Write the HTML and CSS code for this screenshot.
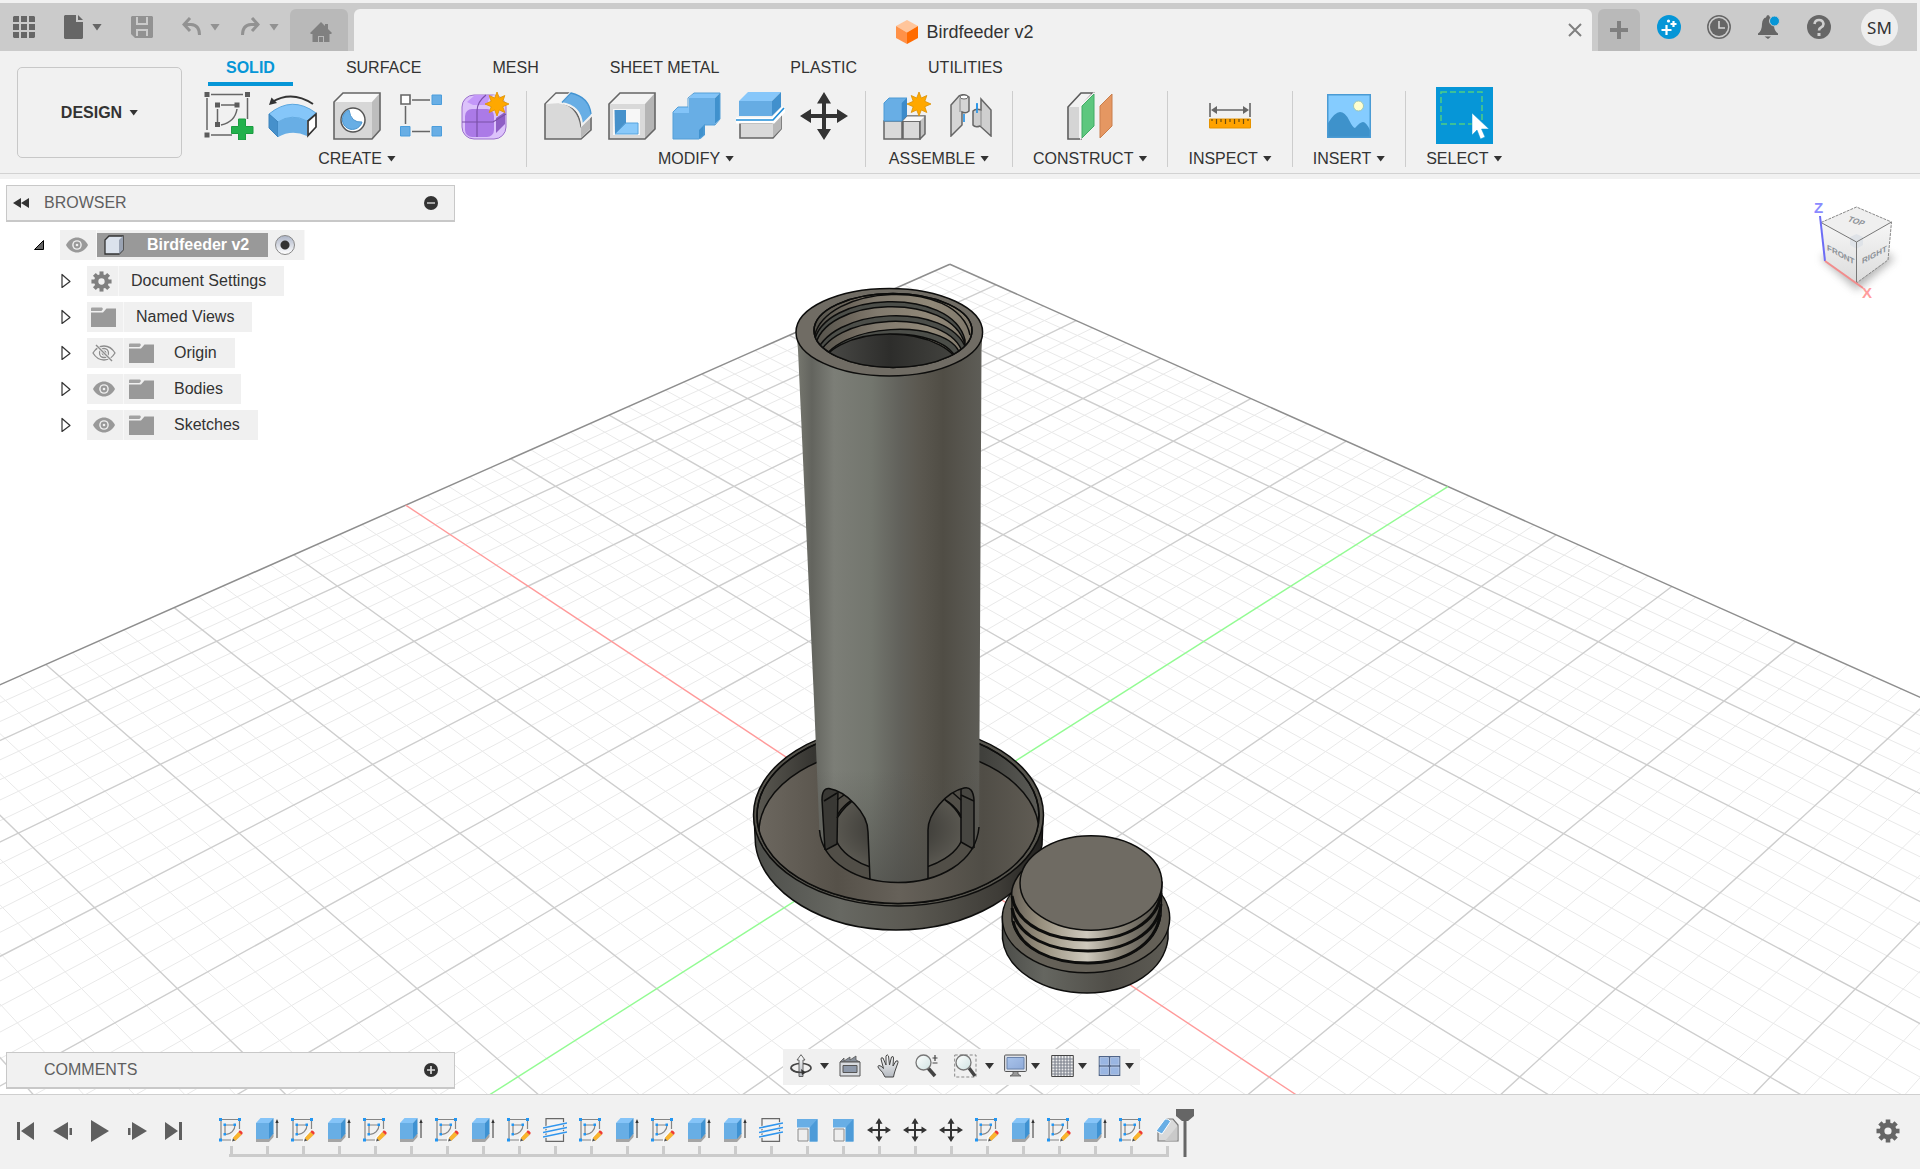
FILE: index.html
```html
<!DOCTYPE html>
<html lang="en">
<head>
<meta charset="utf-8">
<meta name="viewport" content="width=device-width, initial-scale=1">
<title>Birdfeeder v2</title>
<link rel="stylesheet" href="styles.css">
</head>
<body>
<svg class="defs" aria-hidden="true">
  <defs>
    <linearGradient id="lens" x1="0" y1="0" x2="1" y2="1"><stop offset="0" stop-color="#fff"/><stop offset="1" stop-color="#cfe3e2"/></linearGradient>
    <linearGradient id="steel" x1="0" y1="0" x2="0" y2="1"><stop offset="0" stop-color="#fdfdfd"/><stop offset="1" stop-color="#b4b9c0"/></linearGradient>
    <linearGradient id="screen" x1="0" y1="0" x2="1" y2="1"><stop offset="0" stop-color="#a9c3ea"/><stop offset="1" stop-color="#8fabd9"/></linearGradient>
  </defs>
  <symbol id="i-eye" viewBox="0 0 24 18"><path d="M1 9C4 3.500 8 1.500 12 1.500S20 3.500 23 9C20 14.500 16 16.500 12 16.500S4 14.500 1 9Z" fill="#999"/><circle cx="12" cy="9" r="4.800" fill="#f0f0f0"/><circle cx="12" cy="9" r="3.400" fill="#999"/><circle cx="12" cy="9" r="1.300" fill="#f0f0f0"/></symbol>
  <symbol id="i-eye-off" viewBox="0 0 24 18"><g fill="none" stroke="#8d8d8d" stroke-width="1.300"><path d="M1 9C4 4 8 2 12 2S20 4 23 9C20 14 16 16 12 16S4 14 1 9Z"/><circle cx="12" cy="9" r="4.500"/><circle cx="12" cy="9" r="1.800"/></g><path d="M4 1 20 17" stroke="#f0f0f0" stroke-width="3"/><path d="M4 1 20 17" stroke="#8d8d8d" stroke-width="1.500"/></symbol>
  <symbol id="i-folder" viewBox="0 0 25 20"><path d="M0 1.500Q0 .5 1 .5H11L12 2 10.500 4H0Z" fill="#a2a2a2"/><path d="M0 5.500H12L15.500 1.500H25V20H0Z" fill="#999"/></symbol>
  <symbol id="i-gear" viewBox="-12 -12 24 24"><g fill="currentColor"><path fill-rule="evenodd" d="M0-8.400A8.400 8.400 0 1 1 0 8.400 8.400 8.400 0 1 1 0-8.400ZM0-3.600A3.600 3.600 0 1 0 0 3.600 3.600 3.600 0 1 0 0-3.600Z"/><rect x="-2.300" y="-11.500" width="4.600" height="5"/><rect x="-2.300" y="6.500" width="4.600" height="5"/><rect x="-11.500" y="-2.300" width="5" height="4.600"/><rect x="6.500" y="-2.300" width="5" height="4.600"/><g transform="rotate(45)"><rect x="-2.300" y="-11.500" width="4.600" height="5"/><rect x="-2.300" y="6.500" width="4.600" height="5"/><rect x="-11.500" y="-2.300" width="5" height="4.600"/><rect x="6.500" y="-2.300" width="5" height="4.600"/></g></g></symbol>
  <symbol id="i-closed" viewBox="0 0 10 16"><path d="M1 1.500V14.500L9 8.500Z" fill="#fff" stroke="#333" stroke-width="1.200" stroke-linejoin="round"/></symbol>
  <symbol id="i-star" viewBox="-12 -12 24 24"><path d="M0-12 2.300-6 7.800-8.500 5.800-2.700 12 0 5.800 2.700 7.800 8.500 2.300 6 0 12-2.300 6-7.800 8.500-5.800 2.700-12 0-5.800-2.700-7.800-8.500-2.300-6Z" fill="#ffa800" stroke="#dc9100" stroke-width=".8"/></symbol>
  <symbol id="i-move" viewBox="0 0 48 48"><path d="M24 0 31 11.500H26V22H37V17L48 24 37 31V26H26V37H31L24 48 17 37H22V26H11V31L0 24 11 17V22H22V11.500H17Z" fill="#333"/></symbol>

  <symbol id="t-sketch" viewBox="0 0 24 24"><g fill="none" stroke="#858585" stroke-width="1.200"><path d="M2 1.500H20.500V11M2 1.500V22H12"/><path d="M6 7V16.500C12 16.500 16 12 16 7Z"/></g><g fill="#2196f3"><path d="M0 0H3V3H0ZM19 0H22V3H19ZM0 20.500H3V23.500H0ZM4.500 5.500H7V8H4.500ZM14.500 5.500H17V8H14.500ZM4.500 15H7V17.500H4.500Z"/></g><path d="M12 24 12.500 19.500 19 12.500 23.500 16 16.500 23Z" fill="#fff"/><path d="M13 23.500 14 20 16.500 22.500Z" fill="#555"/><path d="M14 20 19.500 14 22.500 16.800 16.500 22.500Z" fill="#fbb52c" stroke="#d99a2b" stroke-width=".5"/><path d="M19.500 14 20.500 12.600Q22 12 23.500 14.500V16L22.500 16.800Z" fill="#ee3a32"/></symbol>
  <symbol id="t-extrude" viewBox="0 0 24 24"><path d="M1 24V20H14L18.500 15V19L14 24Z" fill="#a5a5a5"/><path d="M1 5 5.500 0H18.500L14 5Z" fill="#85c4f8"/><path d="M1 5H14V21H1Z" fill="#68aee5"/><path d="M14 5 18.500 0V15.500L14 21Z" fill="#3f92d2"/><path d="M22 4V20" stroke="#333"/><path d="M22 1 23.700 5H20.300Z" fill="#333"/></symbol>
  <symbol id="t-thread" viewBox="0 0 24 24"><path d="M3 .7H20.500V23.300H3Z" fill="#f3f3f3" stroke="#686868" stroke-width="1.200"/><path d="M0 10 24 5M0 14.500 24 9.500M0 19 24 14" stroke="#f3f3f3" stroke-width="3"/><path d="M0 10 24 5M0 14.500 24 9.500M0 19 24 14" stroke="#2f95ee" stroke-width="1.500"/></symbol>
  <symbol id="t-scale" viewBox="0 0 24 24"><path d="M2 1H22.500V23.500H2Z" fill="#68aee5"/><path d="M16 8 22.500 1V23.500H14V11Z" fill="#4d9bd8"/><path d="M1 9.500H14.500V24H1Z" fill="#f5f5f5"/><path d="M3 11H13V23H3Z" fill="#eee" stroke="#8a8a8a"/></symbol>
  <symbol id="t-chamfer" viewBox="0 0 24 24"><path d="M3 23V13L12 1H18L23 7V23Z" fill="#d9d9d9" stroke="#777" stroke-width="1.200"/><path d="M10 23 22.400 8V22.400Z" fill="#cacaca"/><path d="M1 13 10 1Q13 0 15.500 3.500L7 16Z" fill="#68aee5" stroke="#fff"/></symbol>
</svg>

<div class="app">
  <header class="topbar">
    <div class="quick">
      <button class="ib" aria-label="Show data panel"><svg width="22" height="22" viewBox="0 0 22 22"><path fill="#666" d="M1 0H6V6H0V1ZM8 0H14V6H8ZM16 0H21L22 1V6H16ZM0 8H6V14H0ZM8 8H14V14H8ZM16 8H22V14H16ZM0 16H6V22H1L0 21ZM8 16H14V22H8ZM16 16H22V21L21 22H16Z"/></svg></button>
      <button class="ib ib-menu" aria-label="File"><svg width="19" height="24" viewBox="0 0 19 24"><path d="M1 0H12V7H19V23L18 24H1L0 23V1Z" fill="#666"/><path d="M14 0 19 5H14Z" fill="#666"/></svg><i class="caret caret-grey"></i></button>
      <button class="ib" aria-label="Save"><svg width="22" height="22" viewBox="0 0 22 22"><path fill="#929292" fill-rule="evenodd" d="M1 0H21L22 1V21L21 22H4L0 18V1ZM5 1V9H17V1H15V7H7V1ZM5 13V20H7V15H15V20H17V13Z"/><path d="M11 2H14V6H11Z" fill="#929292"/></svg></button>
      <div class="history">
        <button class="ib ib-menu" aria-label="Undo"><svg width="19" height="20" viewBox="0 0 19 20"><path d="M8 1 2 7.500 8 14M2 7.500H9Q17.500 8 17.500 18" fill="none" stroke="#929292" stroke-width="3"/></svg><i class="caret caret-light"></i></button>
        <button class="ib ib-menu" aria-label="Redo"><svg width="19" height="20" viewBox="0 0 19 20"><path d="M11 1 17 7.500 11 14M17 7.500H10Q1.500 8 1.500 18" fill="none" stroke="#929292" stroke-width="3"/></svg><i class="caret caret-light"></i></button>
      </div>
    </div>
    <button class="home-tab" aria-label="Home"><svg width="22" height="20" viewBox="0 0 22 20"><path d="M11 0 15 4V2H18V7L22 11 21 12H19.500V20H14V14H8V20H2.500V12H1L0 11Z" fill="#808080"/><path d="M9 15H13V20H9Z" fill="#808080"/></svg></button>
    <div class="doc-tab">
      <h1 class="doc-title"><svg width="22" height="24" viewBox="0 0 22 24"><path d="M11 0 22 6 11 12.500 0 6Z" fill="#ffc59b"/><path d="M0 6 11 12.500V24L0 18Z" fill="#ff9147"/><path d="M22 6 11 12.500V24L22 18Z" fill="#ff6b00"/></svg>Birdfeeder v2</h1>
      <button class="ib" aria-label="Close document"><svg width="18" height="18" viewBox="0 0 18 18"><path d="M3 3 15 15M15 3 3 15" stroke="#808080" stroke-width="2"/></svg></button>
    </div>
    <button class="new-tab" aria-label="New design"><svg width="20" height="20" viewBox="0 0 20 20"><path d="M10 1V19M1 10H19" stroke="#808080" stroke-width="4"/></svg></button>
    <div class="account">
      <button class="ib" aria-label="Extensions"><svg width="24" height="24" viewBox="0 0 24 24"><circle cx="12" cy="12" r="12" fill="#0696d7"/><path d="M9.500 10V20M4.500 15H14.500M16.500 6V12M13.500 9H19.500" stroke="#fff" stroke-width="2.200"/><circle cx="11.500" cy="6" r="1.600" fill="#fff"/></svg></button>
      <button class="ib" aria-label="Job status"><svg width="24" height="24" viewBox="0 0 24 24"><circle cx="12" cy="12" r="11.200" fill="none" stroke="#666" stroke-width="1.500"/><circle cx="12" cy="12" r="9" fill="#666"/><path d="M12 6V13H18" fill="none" stroke="#d5d5d5" stroke-width="1.600"/></svg></button>
      <button class="ib" aria-label="Notifications"><svg width="24" height="24" viewBox="0 0 24 24"><path d="M1 20V18.500Q5 16 5 9Q5.500 3 9 2.500Q9.500 0 11 0T13 2.500Q17 4 17 10Q17 16 21 18.500V20ZM7.500 21.500H14L11 24Z" fill="#666"/><circle cx="17.500" cy="6" r="5" fill="#0696d7" stroke="#cbcbcb"/></svg></button>
      <button class="ib" aria-label="Help"><svg width="24" height="24" viewBox="0 0 24 24"><circle cx="12" cy="12" r="12" fill="#666"/><path d="M7.500 9Q8 5 12 5T16.500 9Q16.500 11 14 12.500 12 13.500 12 15.500" fill="none" stroke="#d0d0d0" stroke-width="2.600"/><rect x="10.500" y="18" width="3" height="3" fill="#d0d0d0"/></svg></button>
      <button class="avatar">SM</button>
    </div>
  </header>

  <section class="ribbon">
    <button class="workspace">DESIGN<i class="caret"></i></button>
    <div class="ribbon-main">
      <nav class="tabs">
        <button class="tab tab-on">SOLID</button><button class="tab">SURFACE</button><button class="tab">MESH</button><button class="tab">SHEET METAL</button><button class="tab">PLASTIC</button><button class="tab">UTILITIES</button>
      </nav>
      <div class="groups">
        <div class="group">
          <div class="tools">
            <button class="tool" aria-label="Create sketch"><svg width="50" height="48" viewBox="0 0 50 48"><path d="M7 2.500H39M3 6V38M43.500 6V27M7 43H28" stroke="#666" stroke-width="1.500"/><path d="M17 13H31M13.500 17V30M33 17Q31 30 17 33" fill="none" stroke="#666" stroke-width="1.500"/><path d="M.500 0H5.500V5H.500ZM41 0H46V5H41ZM.500 40.500H5.500V45.500H.500ZM11 10.500H16V15.500H11ZM30.500 10.500H35.500V15.500H30.500ZM11 30H16V35H11Z" fill="#5c5c5c"/><path d="M34.500 27H41.500V34.500H49V41.500H41.500V48H34.500V41.500H27.500V34.500H34.500Z" fill="#22b14c" stroke="#1a9c40"/></svg></button>
            <button class="tool" aria-label="Revolve"><svg width="50" height="46" viewBox="0 0 50 46"><path d="M1 21Q24 2 48 20L39 28Q24 20 10 29Z" fill="#85c6f9" stroke="#5ba7df"/><path d="M1 21 10 29V44L1 35Z" fill="#4690cb" stroke="#3c84be"/><path d="M10 29Q24 20 39 28V43Q24 36 10 44Z" fill="#68aee5"/><path d="M40 28 48 21V34L40 42.500Z" fill="#fff" stroke="#333" stroke-width="1.700"/><path d="M4 9Q24-3 45 11" fill="none" stroke="#333" stroke-width="2"/><path d="M1 12 3.500 4.500 9 10Z" fill="#333"/></svg></button>
            <button class="tool" aria-label="Hole"><svg width="48" height="48" viewBox="0 0 48 48"><path d="M1 10 10 1H47L39 10Z" fill="#f8f8f8"/><path d="M1 10H39V47H1Z" fill="#d7d7d7"/><path d="M39 10 47 1V38L39 47Z" fill="#bdbdbd"/><path d="M1 10 10 1H47V38L39 47H1Z" fill="none" stroke="#666" stroke-width="1.600"/><circle cx="20" cy="28" r="12" fill="#fff" stroke="#555" stroke-width="1.500"/><path d="M16 18Q18 31 29 30A10 10 0 1 1 16 18Z" fill="#68aee5" stroke="#4a94ce"/></svg></button>
            <button class="tool" aria-label="Rectangular pattern"><svg width="42" height="43" viewBox="0 0 42 43"><path d="M12 6H30M5.500 12V30M12 37.500H30" stroke="#666" stroke-width="1.500"/><path d="M1 1H10V10H1Z" fill="#fff" stroke="#666" stroke-width="1.600"/><path d="M32 1H41.500V10.500H32ZM.500 32.500H10V42H.500ZM32 32.500H41.500V42H32Z" fill="#68aee5" stroke="#4b9ddc"/></svg></button>
            <button class="tool" aria-label="Create form"><svg width="48" height="48" viewBox="0 0 48 48"><rect x="1" y="3" width="44" height="44" rx="12" fill="#dcc2fb" stroke="#9a6fcc"/><path d="M6 10 14 3H28L32 13H12Z" fill="#c397f9"/><path d="M35 26 44 20V32L35 41Z" fill="#8f5fc5"/><rect x="4" y="17" width="29" height="28" rx="7" fill="#ab7ae7"/><path d="M1 30H32L45 22M16 45V19Q16 10 25 3" fill="none" stroke="#7a50a8" stroke-width="1.200"/><circle cx="36" cy="11" r="9" fill="#f1f1f1" opacity=".55"/><use href="#i-star" x="24" y="0" width="24" height="24"/></svg></button>
          </div>
          <button class="group-label">CREATE<i class="caret"></i></button>
        </div>
        <div class="group">
          <div class="tools">
            <button class="tool" aria-label="Fillet"><svg width="48" height="48" viewBox="0 0 48 48"><path d="M1 12 12 1H26L18 11Q34 15 37 34L47 24V38L37 47H1Z" fill="#d9d9d9" stroke="#666" stroke-width="1.600"/><path d="M2 12 12 2H25L17 11Z" fill="#f6f6f6"/><path d="M37 34 46 25V37L37 46Z" fill="#b8b8b8"/><path d="M17 11 27 0Q46 4 48 23L38 33Q37 14 17 11Z" fill="#68aee5" stroke="#f1f1f1" stroke-width="2"/><path d="M18 10.500 27 1Q45 5 47 22" fill="none" stroke="#4394d2" stroke-width="1.300"/></svg></button>
            <button class="tool" aria-label="Shell"><svg width="48" height="48" viewBox="0 0 48 48"><path d="M1 12 12 1H47L37 12Z" fill="#f3f3f3"/><path d="M1 12H37V47H1Z" fill="#d9d9d9"/><path d="M37 12 47 1V37L37 47Z" fill="#b5b5b5"/><path d="M1 12 12 1H47V37L37 47H1Z" fill="none" stroke="#666" stroke-width="1.600"/><path d="M5 17H32V43H5Z" fill="#f7f7f7"/><path d="M6.500 18H18V30.500L7 42Z" fill="#4691cb"/><path d="M18 31H30V42H7Z" fill="#89c9fa" stroke="#57a4de"/></svg></button>
            <button class="tool" aria-label="Combine"><svg width="49" height="48" viewBox="0 0 49 48"><path d="M1 21H17V6H43V33H33V47H1Z" fill="#68aee5"/><path d="M1 20 6 15H17V6L22 1H48L43 6H17V21H1Z" fill="#83c4f8"/><path d="M17 6H43V20H17Z" fill="#68aee5"/><path d="M43 6 48 1V27L43 32ZM27 38 33 32V43L27 47Z" fill="#4091cd"/><path d="M1 20 6 15H16V6L22 1H48V27L43 33H32V43L27 47H1Z" fill="none" stroke="#559fd7"/><path d="M28 47.500H36V34H33.500L33 43Z" fill="#f1f1f1"/></svg></button>
            <button class="tool" aria-label="Offset face"><svg width="49" height="47" viewBox="0 0 49 47"><path d="M4 31H36L45 22V37L37 46H4Z" fill="#d9d9d9" stroke="#666" stroke-width="1.600"/><path d="M37 31 45 23V37L37 45Z" fill="#b8b8b8"/><path d="M0 28.500H37L49 16" fill="none" stroke="#fff" stroke-width="6"/><path d="M3 9 12 0H45L36 9Z" fill="#87c7fa"/><path d="M3 9H36V24H3Z" fill="#66ace3"/><path d="M36 9 45 0V15L36 24Z" fill="#4190cd"/><path d="M0 28H37L48 16" fill="none" stroke="#228ed8" stroke-width="1.700"/></svg></button>
            <button class="tool" aria-label="Move"><svg width="48" height="48"><use href="#i-move"/></svg></button>
          </div>
          <button class="group-label">MODIFY<i class="caret"></i></button>
        </div>
        <div class="group">
          <div class="tools">
            <button class="tool" aria-label="New component"><svg width="48" height="48" viewBox="0 0 48 48"><path d="M1 29H19V47H1ZM20 29H37V47H20Z" fill="#d9d9d9" stroke="#666" stroke-width="1.500"/><path d="M20 29 24 24H42V42L37 47V29Z" fill="#c2c2c2" stroke="#666" stroke-width="1.500"/><path d="M20 29 24 24.500H41.500L37 29Z" fill="#f8f8f8"/><path d="M1 11 6 6H24L19 11V29H1Z" fill="#68aee5" stroke="#4c9ad5"/><path d="M19 11 24 6V24L19 29Z" fill="#3c8bca"/><circle cx="36" cy="12" r="9.500" fill="#f1f1f1"/><use href="#i-star" x="24" y="0" width="24" height="24"/></svg></button>
            <button class="tool" aria-label="Joint"><svg width="42" height="43" viewBox="0 0 42 43"><path d="M1 11 9 2Q14-1 19 3V17Q16 20 12 18V31L1 42Z" fill="#d5d5d5" stroke="#666" stroke-width="1.500"/><path d="M10 4V18" stroke="#888"/><ellipse cx="14" cy="3" rx="4" ry="2" fill="#fff" stroke="#666"/><path d="M14 20V28M27 10V18" stroke="#2b96e8" stroke-width="1.700"/><path d="M31 5 41 16V42L30 32Q25 34 23 31V17Q26 14 31 16Z" fill="#cfcfcf" stroke="#666" stroke-width="1.500"/><path d="M31 16V32" stroke="#888"/><path d="M27 9V19" stroke="#2b96e8" stroke-width="1.700"/></svg></button>
          </div>
          <button class="group-label">ASSEMBLE<i class="caret"></i></button>
        </div>
        <div class="group">
          <div class="tools">
            <button class="tool" aria-label="Offset plane"><svg width="46" height="48" viewBox="0 0 46 48"><path d="M1 15 14 1H26L14 14V47H1Z" fill="#f2f2f2" stroke="#5b5b5b" stroke-width="1.600"/><path d="M2 15H12V46H2Z" fill="#d5d5d5"/><path d="M13 13 27 0V35L13 48Z" fill="#f4f4f4"/><path d="M15 14 27 2V34L15 46Z" fill="#5dc77e" stroke="#41ac64"/><path d="M33 14 45 2V34L33 46Z" fill="#e59762" stroke="#c97e4c"/></svg></button>
          </div>
          <button class="group-label">CONSTRUCT<i class="caret"></i></button>
        </div>
        <div class="group">
          <div class="tools">
            <button class="tool" aria-label="Measure"><svg width="42" height="26" viewBox="0 0 42 26"><path d="M1 0V14M41 0V14M4 7H38" stroke="#666" stroke-width="1.600"/><path d="M2 7 8 3V11ZM40 7 34 3V11Z" fill="#666"/><path d="M.500 16H41.500V25H.500Z" fill="#ffa200" stroke="#e59300"/><path d="M3 16V18M7.500 16V21M12 16V19M16.500 16V21M21 16V19M25.500 16V21M30 16V19M34.500 16V21M39 16V18" stroke="#6d4d10" stroke-width="1.200"/></svg></button>
          </div>
          <button class="group-label">INSPECT<i class="caret"></i></button>
        </div>
        <div class="group">
          <div class="tools">
            <button class="tool" aria-label="Insert canvas"><svg width="44" height="44" viewBox="0 0 44 44"><path d="M.500.500H43.500V43.500H.500Z" fill="#85ccff"/><path d="M1 29Q8 18 13 18T22 26 28 34Q33 28 36 28T43 36V43H1Z" fill="#3e92cb"/><path d="M.750.750H43.250V43.250H.750Z" fill="none" stroke="#4b9bd4" stroke-width="1.500"/><circle cx="31.500" cy="12" r="5" fill="#ffffcf" stroke="#9ec7b8"/></svg></button>
          </div>
          <button class="group-label">INSERT<i class="caret"></i></button>
        </div>
        <div class="group">
          <div class="tools">
            <button class="tool tool-on" aria-label="Select"><svg width="57" height="57" viewBox="0 0 57 57"><path d="M5 5H46V37H5Z" fill="none" stroke="#4fce84" stroke-width="1.500" stroke-dasharray="6 3"/><path d="M36 26V48L41 43 44.500 52 49 50 45.500 42H53Z" fill="#fff" stroke="#0696d7" stroke-width=".5"/></svg></button>
          </div>
          <button class="group-label">SELECT<i class="caret"></i></button>
        </div>
      </div>
    </div>
  </section>

  <main class="stage">
    <svg class="scene" viewBox="0 179 1920 915" preserveAspectRatio="xMidYMid slice" role="img" aria-label="Bird feeder model on the ground grid">
      <defs>
        <linearGradient id="tube" gradientUnits="userSpaceOnUse" x1="797" y1="0" x2="982" y2="0"><stop offset="0" stop-color="#76776f"/><stop offset=".08" stop-color="#63645e"/><stop offset=".2" stop-color="#7c7e77"/><stop offset=".4" stop-color="#73766e"/><stop offset=".55" stop-color="#62625c"/><stop offset=".66" stop-color="#5b5850"/><stop offset=".79" stop-color="#504d45"/><stop offset="1" stop-color="#5e5d57"/></linearGradient>
        <linearGradient id="tubeBase" x1="0" y1="0" x2="0" y2="1"><stop offset="0" stop-color="#4f504c" stop-opacity="0"/><stop offset="1" stop-color="#4a4a46" stop-opacity=".6"/></linearGradient>
        <linearGradient id="bore" x1="0" y1="0" x2="1" y2="0"><stop offset="0" stop-color="#54524b"/><stop offset=".25" stop-color="#70695e"/><stop offset=".4" stop-color="#817a6e"/><stop offset=".75" stop-color="#918878"/><stop offset="1" stop-color="#7e776a"/></linearGradient>
        <linearGradient id="boreDeep" x1="0" y1="0" x2="1" y2="0"><stop offset="0" stop-color="#4c4c49"/><stop offset=".5" stop-color="#2d2d2b"/><stop offset="1" stop-color="#454541"/></linearGradient>
        <linearGradient id="dishSide" x1="0" y1="0" x2="1" y2="0"><stop offset="0" stop-color="#4d4e4a"/><stop offset=".3" stop-color="#676862"/><stop offset=".55" stop-color="#5a5851"/><stop offset=".85" stop-color="#3e3c37"/><stop offset="1" stop-color="#22211f"/></linearGradient>
        <linearGradient id="dishWall" x1="0" y1="0" x2="1" y2="0"><stop offset="0" stop-color="#5a5851"/><stop offset=".2" stop-color="#363531"/><stop offset=".8" stop-color="#40403c"/><stop offset="1" stop-color="#5b5b56"/></linearGradient>
        <linearGradient id="dishFloor" x1="0" y1="0" x2="1" y2="0"><stop offset="0" stop-color="#6c675f"/><stop offset=".28" stop-color="#565149"/><stop offset=".5" stop-color="#666159"/><stop offset=".8" stop-color="#504d46"/><stop offset="1" stop-color="#605c54"/></linearGradient>
        <linearGradient id="thread" x1="0" y1="0" x2="1" y2="0"><stop offset="0" stop-color="#676158"/><stop offset=".2" stop-color="#99917f"/><stop offset=".5" stop-color="#cec9bd"/><stop offset=".7" stop-color="#8f897c"/><stop offset="1" stop-color="#4d4b45"/></linearGradient>
        <linearGradient id="capSide" x1="0" y1="0" x2="1" y2="0"><stop offset="0" stop-color="#4c4d49"/><stop offset=".25" stop-color="#656660"/><stop offset=".65" stop-color="#504e48"/><stop offset="1" stop-color="#5d5b54"/></linearGradient>
        <radialGradient id="pool"><stop offset="0" stop-color="#2f2e2b"/><stop offset="1" stop-color="#5a5851"/></radialGradient>
        <clipPath id="boreClip"><ellipse cx="893" cy="330.500" rx="79" ry="37"/></clipPath>
        <clipPath id="dishClip"><ellipse cx="898" cy="815.500" rx="141" ry="88"/></clipPath>
        <clipPath id="archL"><path d="M825 850 822 800Q822 788 829 788.500C845 791 868 812 868 832L870 879.500Q842 873 825 850Z"/></clipPath>
        <clipPath id="archR"><path d="M974 848V800Q973 786 964 788C946 792 928 814 928 830V879Q956 872 974 848Z"/></clipPath>
      </defs>
      <path class="grid-minor" id="gridMinor"/>
      <path class="grid-major" id="gridMajor"/>
      <path class="grid-edge" id="gridEdge"/>
      <path class="axis-x" id="axisX"/>
      <path class="axis-y" id="axisY"/>

      <g class="model">
        <path d="M754 815 755.500 845C762 893 824 930 896 930S1034 893 1042 845L1043 815Z" fill="url(#dishSide)"/>
        <ellipse cx="898.500" cy="815" rx="145" ry="91" fill="#57554e"/>
        <ellipse cx="898" cy="815.500" rx="141" ry="88" fill="url(#dishWall)"/>
        <g clip-path="url(#dishClip)"><ellipse cx="899" cy="832" rx="140" ry="86" fill="url(#dishFloor)"/></g>
        <ellipse class="outline" cx="898" cy="815.500" rx="141" ry="88"/>

        <path class="no-line" d="M796.500 332 798 350 814 700 819.500 832C822 863 858 882.500 898 882.500S976 863 979 832L981.500 350 982.500 332Z" fill="url(#tube)"/>
        <path class="no-line" d="M817 770 819.500 832C822 863 858 882.500 898 882.500S976 863 979 832V770Z" fill="url(#tubeBase)"/>
        <g clip-path="url(#archL)">
          <path d="M820 780H872V885H820Z" fill="#514e47"/>
          <ellipse cx="898" cy="829" rx="64" ry="42" fill="url(#pool)"/>
          <path d="M820 785 838 790 837 844 820 853Z" fill="#393834"/>
          <path class="outline" d="M824 801 837 793M837 800 844 795M837 818Q845 805 858 797"/>
        </g>
        <g clip-path="url(#archR)">
          <path d="M925 780H976V885H925Z" fill="#514e47"/>
          <ellipse cx="898" cy="829" rx="66" ry="42" fill="url(#pool)"/>
          <path d="M961 785H975V850L961 842Z" fill="#474641"/>
          <path class="outline" d="M961 795 974 801M945 800Q956 808 961 818M953 793 961 800"/>
        </g>
        <path class="outline" d="M825 850 822 800Q822 788 829 788.500C845 791 868 812 868 832L870 879.500M974 848V800Q973 786 964 788C946 792 928 814 928 830V879"/>
        <path class="outline" d="M819.500 830C822 863 858 882.500 898 882.500S976 863 979 827"/>

        <ellipse cx="889.300" cy="332.200" rx="93.300" ry="43.800" fill="#706c64"/>
        <ellipse cx="893" cy="330.500" rx="79" ry="37" fill="url(#bore)"/>
        <g clip-path="url(#boreClip)">
          <path d="M814 343C822 291 952 286 965 340V345C952 291 822 296 815 348Z" fill="#4c4e49"/>
          <path d="M815 357C827 306 950 301 966 349L963 354C950 307 827 312 817 361Z" fill="#4c4e49"/>
          <path d="M820 366C834 321 948 318 960 354L956 358C940 325 840 324 824 370Z" fill="#4c4e49"/>
          <ellipse cx="890" cy="371" rx="70" ry="37" fill="url(#boreDeep)"/>
          <path class="outline" d="M814 338C824 284 958 277 970 335"/>
        </g>
        <ellipse class="outline" cx="893" cy="330.500" rx="79" ry="37"/>

        <path d="M1002.500 916V939C1006 970 1043 993 1087 993S1164 970 1168 939V916Z" fill="url(#capSide)"/>
        <ellipse cx="1086" cy="918" rx="83.700" ry="54.700" fill="#646057"/>
        <path d="M1021 872Q1010 886 1012 897V920C1018 949 1052 963 1087 963S1156 947 1161 915L1162 882Z" fill="url(#thread)"/>
        <g class="threads">
          <path d="M1012 896C1017 927 1052 940 1088 940S1158 923 1161 893"/>
          <path d="M1012 908C1017 938 1052 951 1088 951S1158 934 1161 904"/>
          <path d="M1013 921C1019 949 1052 963 1088 963S1156 945 1160 915"/>
        </g>
        <ellipse cx="1091" cy="883" rx="71" ry="47.300" fill="#6f6b63"/>
      </g>
    </svg>

    <div class="overlay">
      <div class="overlay-top">
        <aside class="browser">
          <div class="panel">
            <button class="ib" aria-label="Collapse browser"><svg width="16" height="10" viewBox="0 0 16 10"><path d="M8 0V10L0 5ZM16 0V10L8 5Z" fill="#333"/></svg></button>
            <h2>BROWSER</h2>
            <button class="ib" aria-label="Minimize browser"><svg width="14" height="14" viewBox="0 0 14 14"><circle cx="7" cy="7" r="7" fill="#333"/><path d="M3 7H11" stroke="#bbb" stroke-width="1.700"/></svg></button>
          </div>
          <ul class="tree">
            <li class="row row-root">
              <button class="ib toggle" aria-label="Collapse Birdfeeder v2"><svg width="10" height="10" viewBox="0 0 10 10"><path d="M9.500.500V9.500H.500Z" fill="#666" stroke="#000"/></svg></button>
              <div class="chip">
                <button class="cell" aria-label="Toggle visibility"><svg width="24" height="18"><use href="#i-eye"/></svg></button>
                <button class="root-name"><svg width="20" height="20" viewBox="0 0 20 20"><path d="M1 5 5 1H19V15L15 19H1Z" fill="#dbe2ec" stroke="#333" stroke-width="1.300"/><path d="M15 5 19 1V15L15 19Z" fill="#9aa3b3"/></svg>Birdfeeder v2</button>
                <label class="cell cell-radio"><input class="activate" type="radio" name="active" checked aria-label="Activate Birdfeeder v2"></label>
              </div>
            </li>
            <li class="row"><button class="ib toggle" aria-label="Expand"><svg width="10" height="16"><use href="#i-closed"/></svg></button><div class="chip"><span class="cell cell-gear"><svg width="21" height="21"><use href="#i-gear"/></svg></span><button class="name name-doc">Document Settings</button></div></li>
            <li class="row"><button class="ib toggle" aria-label="Expand"><svg width="10" height="16"><use href="#i-closed"/></svg></button><div class="chip"><span class="cell"><svg width="25" height="20"><use href="#i-folder"/></svg></span><button class="name name-doc">Named Views</button></div></li>
            <li class="row"><button class="ib toggle" aria-label="Expand"><svg width="10" height="16"><use href="#i-closed"/></svg></button><div class="chip"><button class="cell" aria-label="Show Origin"><svg width="24" height="18"><use href="#i-eye-off"/></svg></button><button class="name"><svg width="25" height="20"><use href="#i-folder"/></svg>Origin</button></div></li>
            <li class="row"><button class="ib toggle" aria-label="Expand"><svg width="10" height="16"><use href="#i-closed"/></svg></button><div class="chip"><button class="cell" aria-label="Hide Bodies"><svg width="24" height="18"><use href="#i-eye"/></svg></button><button class="name"><svg width="25" height="20"><use href="#i-folder"/></svg>Bodies</button></div></li>
            <li class="row"><button class="ib toggle" aria-label="Expand"><svg width="10" height="16"><use href="#i-closed"/></svg></button><div class="chip"><button class="cell" aria-label="Hide Sketches"><svg width="24" height="18"><use href="#i-eye"/></svg></button><button class="name"><svg width="25" height="20"><use href="#i-folder"/></svg>Sketches</button></div></li>
          </ul>
        </aside>
        <svg class="viewcube" width="100" height="110" viewBox="1810 195 100 110" role="img" aria-label="View cube">
          <defs><filter id="soft" x="-50%" y="-50%" width="200%" height="200%"><feGaussianBlur stdDeviation="4"/></filter>
          <linearGradient id="face" x1="0" y1="0" x2="0" y2="1"><stop offset="0" stop-color="#f6f6f6"/><stop offset="1" stop-color="#dcdcdc"/></linearGradient></defs>
          <path d="M1821 258 1857 290 1895 258 1857 240Z" fill="#777" opacity=".55" filter="url(#soft)"/>
          <path d="M1821 222.500 1856.500 242V283L1825 261Z" fill="url(#face)"/><path d="M1891.500 222 1856.500 242V283L1888 260Z" fill="url(#face)"/><path d="M1856.500 207 1891.500 222 1856.500 242 1821 222.500Z" fill="#efefef"/>
          <path d="M1850 237 1856.500 234 1863 237V245L1856.500 249 1850 245Z" fill="#dfe3e8"/>
          <path d="M1821 222.500 1856.500 242 1891.500 222M1856.500 242V283" fill="none" stroke="#777"/>
          <path d="M1821 222.500 1856.500 207 1891.500 222 1888 260 1856.500 283" fill="none" stroke="#888" stroke-dasharray="3 1"/>
          <path d="M1820 216 1825 261" stroke="#6c6cf5" stroke-width="2"/><path d="M1825 261 1863 288" stroke="#f28c8c" stroke-width="2"/>
          <text class="axis-label z" x="1814" y="213">Z</text><text class="axis-label x" x="1862" y="298">X</text>
          <text class="face-label" transform="translate(1847 221) rotate(18) skewX(-18)">TOP</text>
          <text class="face-label" transform="translate(1827 250) skewY(28)">FRONT</text>
          <text class="face-label" transform="translate(1862 264) skewY(-28)">RIGHT</text>
        </svg>
      </div>
      <div class="overlay-bottom">
        <div class="panel comments"><h2>COMMENTS</h2><button class="ib" aria-label="Add comment"><svg width="14" height="14" viewBox="0 0 14 14"><circle cx="7" cy="7" r="7" fill="#333"/><path d="M3 7H11M7 3V11" stroke="#ddd" stroke-width="1.700"/></svg></button></div>
        <div class="navbar">
          <button class="nav nav-menu" aria-label="Orbit"><svg width="22" height="24" viewBox="0 0 22 24"><ellipse cx="11" cy="14" rx="10" ry="4.500" fill="none" stroke="#444" stroke-width="1.600"/><path d="M11 .700 15 6H13V22.500H9V6H7Z" fill="url(#steel)" stroke="#555" stroke-width=".9"/><path d="M1 14Q3 18.500 13 18.500" fill="none" stroke="#444" stroke-width="1.600"/><path d="M11 15 16 18.500 12 21Z" fill="#333"/></svg><i class="caret"></i></button>
          <button class="nav" aria-label="Look at"><svg width="22" height="24" viewBox="0 0 22 24"><path d="M1 8 5 4V7L11 3V6L17 2V6L21 8Z" fill="#888f99" stroke="#555" stroke-width=".8"/><path d="M1 8H21V22H1Z" fill="#d9dce0" stroke="#555"/><path d="M4 11.500H18V18.500H4Z" fill="#8e99aa" stroke="#555"/></svg></button>
          <button class="nav" aria-label="Pan"><svg width="22" height="24" viewBox="0 0 22 24"><path d="M8 23Q6 18 1.500 14Q0 12 2 11.500Q4 11.500 6.500 14.500L4 5Q4 3 6 4L9 11V2Q10-.5 11.500 2L12.500 11 14.500 3Q16.500 1.500 16.500 4L16 12 19 7Q21.500 6 21 8.500L18 17Q17 20 16.500 23Z" fill="url(#steel)" stroke="#444"/></svg></button>
          <button class="nav" aria-label="Zoom"><svg width="23" height="24" viewBox="0 0 23 24"><path d="M13 14 20 22" stroke="#444" stroke-width="3.500"/><circle cx="8.500" cy="8.500" r="7.500" fill="url(#lens)" stroke="#777" stroke-width="1.300"/><path d="M20 1V7M17.500 4H22.500M17.500 9H22.500" stroke="#444" stroke-width="1.200"/></svg></button>
          <button class="nav nav-menu" aria-label="Zoom window"><svg width="23" height="24" viewBox="0 0 23 24"><path d="M.700 1H22V23H.700Z" fill="none" stroke="#888" stroke-dasharray="3 2"/><path d="M15 14 21 22" stroke="#444" stroke-width="3.500"/><circle cx="9.500" cy="8.500" r="7.500" fill="url(#lens)" stroke="#777" stroke-width="1.300"/></svg><i class="caret"></i></button>
          <button class="nav nav-tight" aria-label="Display settings"><svg width="23" height="24" viewBox="0 0 23 24"><path d="M9 17H14V20L17 22H6L9 20Z" fill="#999" stroke="#555" stroke-width=".8"/><rect x=".6" y="1" width="21.800" height="16.500" rx="1" fill="#dfe2e8" stroke="#555"/><path d="M3 3.500H20V15H3Z" fill="url(#screen)" stroke="#6b84ad"/></svg><i class="caret"></i></button>
          <button class="nav nav-tight" aria-label="Grid and snaps"><svg width="23" height="24" viewBox="0 0 23 24"><path d="M.700 1.500H22.300V22.500H.700Z" fill="#ececec" stroke="#444"/><path d="M4 2V22M7 2V22M10 2V22M13 2V22M16 2V22M19 2V22M1 5H22M1 8H22M1 11H22M1 14H22M1 17H22M1 20H22" stroke="#7b808c" stroke-width="1.100"/></svg><i class="caret"></i></button>
          <button class="nav nav-tight" aria-label="Viewports"><svg width="23" height="24" viewBox="0 0 23 24"><path d="M.700 2H22.300V22H.700Z" fill="#4f6488"/><path d="M2 3.500H10.500V11H2ZM12.500 3.500H21V11H12.500ZM2 13H10.500V20.500H2ZM12.500 13H21V20.500H12.500Z" fill="#9ab6e2" stroke="#c3d3ec" stroke-width=".7"/></svg><i class="caret"></i></button>
        </div>
      </div>
    </div>
  </main>

  <footer class="timeline">
    <div class="player">
      <button class="ib" aria-label="Go to start"><svg width="18" height="20" viewBox="0 0 18 20"><path d="M0 1H3V19H0ZM17 1V19L4 10Z" fill="#5f5f5f"/></svg></button>
      <button class="ib" aria-label="Step back"><svg width="20" height="20" viewBox="0 0 20 20"><path d="M15 1V19L0 10ZM16.500 7H19V14H16.500Z" fill="#5f5f5f"/></svg></button>
      <button class="ib" aria-label="Play"><svg width="18" height="24" viewBox="0 0 18 24"><path d="M0 1 18 12 0 23Z" fill="#5f5f5f"/></svg></button>
      <button class="ib" aria-label="Step forward"><svg width="20" height="20" viewBox="0 0 20 20"><path d="M5 1V19L20 10ZM1 7H3.500V14H1Z" fill="#5f5f5f"/></svg></button>
      <button class="ib" aria-label="Go to end"><svg width="18" height="20" viewBox="0 0 18 20"><path d="M14 1H17V19H14ZM0 1V19L13 10Z" fill="#5f5f5f"/></svg></button>
    </div>
    <div class="track">
      <ol class="features" id="features"></ol>
      <div class="rail"></div>
    </div>
    <svg class="marker" width="18" height="48" viewBox="0 0 18 48"><path d="M0 0H18V7L12 12H10.500V48H7.500V12H6L0 7Z" fill="#666"/></svg>
    <button class="ib settings" aria-label="Timeline settings"><svg width="24" height="24"><use href="#i-gear"/></svg></button>
  </footer>
</div>
<script src="script.js"></script>
</body>
</html>
```
FILE: styles.css
```css
* { box-sizing: border-box; }

body {
  margin: 0;
  font: 16px/20px "Liberation Sans", Arial, sans-serif;
  color: #333;
  background: #f1f1f1;
}

button {
  font: inherit;
  color: inherit;
  border: 0;
  padding: 0;
  margin: 0;
  background: none;
}

svg { display: block; flex: none; }
h1, h2 { margin: 0; font-weight: 400; }
ul, ol { margin: 0; padding: 0; list-style: none; }

.defs { position: absolute; width: 0; height: 0; }

.app {
  display: flex;
  flex-direction: column;
  min-height: 100vh;
}

.ib { display: flex; align-items: center; justify-content: center; }
.ib-menu { gap: 9px; }

.caret {
  width: 9px;
  height: 6px;
  background: #333;
  clip-path: polygon(0 0, 100% 0, 50% 100%);
}
.caret-grey { width: 10px; height: 7px; background: #666; }
.caret-light { width: 10px; height: 7px; background: #929292; }

/* Top bar */
.topbar {
  display: flex;
  height: 48px;
  margin: 3px 3px 0 0;
  background: #cbcbcb;
}
.quick {
  display: flex;
  align-items: center;
  gap: 29px;
  padding: 0 11px 0 13px;
}
.history { display: flex; gap: 21px; }
.home-tab,
.new-tab {
  display: flex;
  align-items: center;
  justify-content: center;
  margin-top: 6px;
  background: #b9b9b9;
  border-radius: 6px 6px 0 0;
}
.home-tab { width: 58px; padding-top: 4px; padding-left: 4px; }
.new-tab { width: 42px; }
.doc-tab {
  display: flex;
  align-items: center;
  flex: 1;
  margin: 6px 6px 0;
  padding: 0 8px 0 10px;
  background: #f1f1f1;
  border-radius: 6px 6px 0 0;
}
.doc-title {
  display: flex;
  align-items: center;
  justify-content: center;
  gap: 8px;
  flex: 1;
  padding-top: 3px;
  font-size: 18px;
  line-height: 24px;
}
.account {
  display: flex;
  align-items: center;
  gap: 26px;
  padding: 0 19px 0 17px;
}
.avatar {
  width: 37px;
  height: 37px;
  margin-left: 4px;
  border-radius: 50%;
  background: #eee;
  font: 17px/37px "Noto Sans", sans-serif;
}

/* Ribbon */
.ribbon {
  display: flex;
  gap: 6px;
  height: 123px;
  margin-bottom: 5px;
  padding-left: 17px;
  border-bottom: 1px solid #d2d2d2;
}
.workspace {
  display: flex;
  align-items: center;
  justify-content: center;
  gap: 7px;
  width: 165px;
  height: 91px;
  margin-top: 16px;
  border: 1px solid #c8c8c8;
  border-radius: 5px;
  font-weight: 700;
}
.tabs {
  display: flex;
  gap: 35px;
  padding-left: 20px;
}
.tab {
  height: 35px;
  padding: 2px 18px 0;
  border-bottom: 4px solid transparent;
}
.tab-on {
  font-weight: 700;
  color: #0696d7;
  border-color: #0696d7;
}
.groups { display: flex; padding-top: 1px; }
.group {
  display: flex;
  flex-direction: column;
  align-items: center;
  padding: 0 9px;
  background: linear-gradient(#cdcdcd, #cdcdcd) right 4px / 1px 76px no-repeat;
  border-right: 1px solid transparent;
  background-origin: border-box;
}
.group:last-child { background: none; }
.tools { display: flex; }
.tool {
  display: flex;
  align-items: center;
  justify-content: center;
  width: 64px;
  height: 57px;
}
.tool-on { width: 57px; background: #0696d7; }
.group-label {
  display: flex;
  align-items: center;
  gap: 5px;
  height: 29px;
  padding: 0 11px;
}

/* Modelling viewport */
.stage {
  display: grid;
  flex: 1;
  min-height: 640px;
  background: #fff;
  overflow: hidden;
}
.scene, .overlay { grid-area: 1 / 1; min-width: 0; min-height: 0; }
.scene { width: 100%; height: 100%; contain: size; }
.grid-minor, .grid-major, .grid-edge, .axis-x, .axis-y { fill: none; stroke-width: 1; }
.grid-minor { stroke: #e9e9e9; }
.grid-major { stroke: #cecece; stroke-width: 1.4; }
.grid-edge { stroke: #8e8e8e; stroke-width: 1.5; }
.axis-x { stroke: #ff9a9a; stroke-width: 1.4; }
.axis-y { stroke: #93fb93; stroke-width: 1.4; }
.model { stroke: #0d0d0c; stroke-width: 1.5; stroke-linejoin: round; }
.model .no-line { stroke: none; }
.outline { fill: none; }
.threads { fill: none; stroke-width: 3; }

.overlay {
  display: flex;
  flex-direction: column;
  justify-content: space-between;
  padding: 6px 6px 5px;
  z-index: 1;
}
.overlay-top { display: flex; justify-content: space-between; align-items: flex-start; }
.panel {
  display: flex;
  align-items: center;
  width: 449px;
  height: 37px;
  padding: 0 16px 0 6px;
  color: #5f5f5f;
  background: #f1f1f1;
  border: 1px solid #c8c8c8;
  border-bottom-width: 2px;
}
.panel h2 { flex: 1; padding-left: 15px; font-size: 16px; }
.panel.comments h2 { padding-left: 31px; }

.tree {
  display: flex;
  flex-direction: column;
  gap: 6px;
  padding-top: 8px;
}
.row { display: flex; height: 30px; padding-left: 48px; }
.row-root { padding-left: 21px; }
.toggle { width: 33px; }
.row .toggle { padding-right: 9px; }
.chip { display: flex; align-items: center; background: #f0f0f0; }
.cell {
  display: flex;
  align-items: center;
  justify-content: center;
  width: 37px;
  height: 30px;
  padding-right: 3px;
  border-right: 1px solid #f8f8f8;
}
.cell-gear { width: 32px; color: #808080; }
.name {
  display: flex;
  align-items: center;
  gap: 20px;
  padding: 0 18px 0 5px;
}
.name-doc { padding-left: 12px; }
.root-name {
  display: flex;
  align-items: center;
  gap: 23px;
  height: 24px;
  padding: 0 19px 0 7px;
  font-weight: 700;
  color: #fff;
  background: #999;
}
.activate {
  appearance: none;
  width: 20px;
  height: 20px;
  margin: 0;
  border: 1px solid #888;
  border-radius: 50%;
  background: radial-gradient(circle, #333 0 4px, transparent 5px), linear-gradient(#aeb6c8, #fff);
}

.viewcube { margin: 10px 4px 0 0; }
.axis-label { font: 700 15px "Liberation Sans", Arial, sans-serif; }
.z { fill: #8a8aff; }
.x { fill: #ff9c9c; }
.face-label { font: 700 8px "Liberation Sans", Arial, sans-serif; fill: #8b9096; }

.overlay-bottom { display: flex; align-items: flex-end; gap: 328px; }
.navbar {
  display: flex;
  align-items: center;
  gap: 16px;
  height: 36px;
  margin-bottom: 4px;
  padding: 0 6px 2px 7px;
  background: #f0f0f0;
}
.nav { display: flex; align-items: center; }
.nav-menu { gap: 8px; }
.nav-tight { gap: 4px; }
.nav-menu + .nav-tight { margin-left: -6px; }
.nav-tight + .nav-tight { margin-left: -5px; }
.nav-menu:first-child { margin-right: -6px; }

/* Timeline */
.timeline {
  display: flex;
  align-items: flex-start;
  height: 75px;
  padding: 14px 20px 0 17px;
  border-top: 1px solid #cfcfcf;
  background: #f1f1f1;
}
.player {
  display: flex;
  align-items: center;
  gap: 18px;
  width: 196px;
  height: 44px;
}
.track { padding-top: 9px; }
.features { display: flex; }
.feature {
  display: flex;
  flex-direction: column;
  align-items: center;
  gap: 4px;
  width: 36px;
}
.feature::after { content: ""; width: 3px; height: 8px; background: #cbcbcb; }
.rail { height: 3px; margin: 0 16px; background: #cbcbcb; }
.marker { margin-left: -9px; }
.settings { height: 44px; margin-left: auto; color: #666; }
```
FILE: script.js
```js
// Ground plane: p runs along the red axis, q along the green one (1 unit = one major square).
const P_MIN = -5.6, Q_MIN = -6, P_MAX = 10, Q_MAX = 10, DIVISIONS = 5;

function project(p, q) {
  const w = 1 - 0.0395 * p - 0.0395 * q;
  const x = (901.4 + 72.49 * p - 148.27 * q) / w;
  const y = (833.4 + 38.66 * p + 38.59 * q) / w;
  return x.toFixed(2) + " " + y.toFixed(2);
}

const alongP = q => "M" + project(P_MIN, q) + "L" + project(P_MAX, q);
const alongQ = p => "M" + project(p, Q_MIN) + "L" + project(p, Q_MAX);

let minor = "", major = "";
for (let i = Math.round(P_MIN * DIVISIONS) + 1; i <= P_MAX * DIVISIONS; i++) {
  if (i % DIVISIONS) minor += alongQ(i / DIVISIONS);
  else if (i) major += alongQ(i / DIVISIONS);
}
for (let i = Q_MIN * DIVISIONS + 1; i <= Q_MAX * DIVISIONS; i++) {
  if (i % DIVISIONS) minor += alongP(i / DIVISIONS);
  else if (i) major += alongP(i / DIVISIONS);
}

const setPath = (id, d) => document.getElementById(id).setAttribute("d", d);
setPath("gridMinor", minor);
setPath("gridMajor", major);
setPath("gridEdge", alongQ(P_MIN) + alongP(Q_MIN));
setPath("axisX", alongP(0));
setPath("axisY", alongQ(0));

// Timeline features in build order.
const FEATURES = "sketch extrude sketch extrude sketch extrude sketch extrude sketch thread sketch extrude sketch extrude extrude thread scale scale move move move sketch extrude sketch extrude sketch chamfer".split(" ");
document.getElementById("features").innerHTML = FEATURES.map(type => {
  const icon = type === "move" ? "i-move" : "t-" + type;
  return `<li><button class="feature" aria-label="${type}"><svg width="24" height="24"><use href="#${icon}"/></svg></button></li>`;
}).join("");
```
